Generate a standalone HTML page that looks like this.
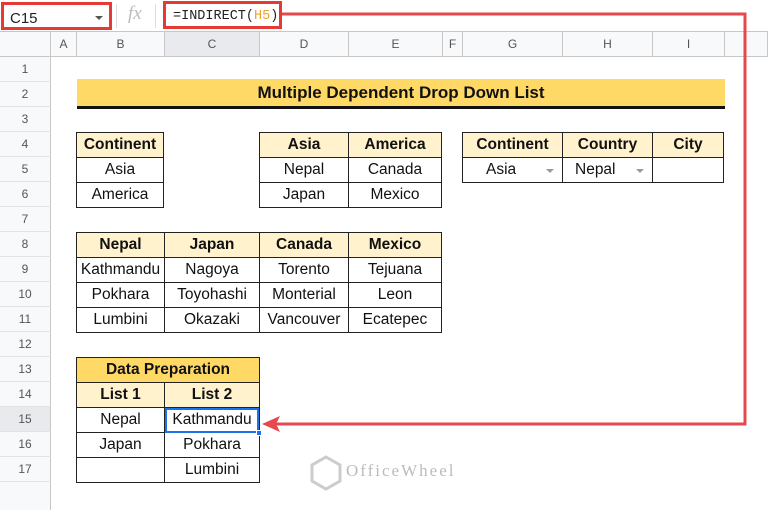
<!DOCTYPE html>
<html><head><style>
body{margin:0;width:768px;height:510px;overflow:hidden;background:#fff;font-family:"Liberation Sans",Arial,sans-serif;position:relative}
.a{position:absolute;box-sizing:border-box}
.c{position:absolute;box-sizing:border-box;display:flex;align-items:center;justify-content:center;font-size:15.5px;color:#111;background:#fff;border:1px solid #222;margin:0 0 0 -1px}
.h{background:#fff2cc;font-weight:bold}
.y{background:#ffd966;font-weight:bold}
.ch{position:absolute;top:32px;height:25px;display:flex;align-items:center;justify-content:center;font-size:12px;color:#555;background:#f8f9fa;border-right:1px solid #c7c7c7;border-bottom:1px solid #c7c7c7;box-sizing:border-box}
.rh{position:absolute;left:0;width:51px;height:25px;display:flex;align-items:center;justify-content:center;font-size:12px;color:#555;background:#f8f9fa;border-right:1px solid #c7c7c7;border-bottom:1px solid #e2e3e3;box-sizing:border-box}
.dd{position:absolute;right:8px;top:11px;border-left:4px solid transparent;border-right:4px solid transparent;border-top:4px solid #999}
</style></head><body>
<div class="a" style="left:0;top:0;width:768px;height:32px;background:#fff;border-bottom:1px solid #c7c7c7"></div>
<div class="a" style="left:1px;top:2px;width:111px;height:28px;border:3px solid #e53935;font-size:15px;padding:5px 0 0 6px;color:#222">C15<div style="position:absolute;right:6px;top:11px;border-left:4px solid transparent;border-right:4px solid transparent;border-top:4px solid #555"></div></div>
<div class="a" style="left:116px;top:4px;width:1px;height:24px;background:#ddd"></div>
<div class="a" style="left:128px;top:3px;font-family:'Liberation Serif',serif;font-style:italic;font-size:19px;color:#bbb">fx</div>
<div class="a" style="left:155px;top:4px;width:1px;height:24px;background:#ddd"></div>
<div class="a" style="left:163px;top:1px;width:119px;height:28px;border:3px solid #e53935;font-family:'Liberation Mono',monospace;font-size:13.5px;padding:5px 0 0 7px;color:#222">=INDIRECT(<span style="color:#f0a030">H5</span>)</div>
<div class="ch" style="left:0;width:51px"></div>
<div class="ch" style="left:51px;width:26px">A</div>
<div class="ch" style="left:77px;width:88px">B</div>
<div class="ch" style="left:165px;width:95px;background:#e8eaed">C</div>
<div class="ch" style="left:260px;width:89px">D</div>
<div class="ch" style="left:349px;width:94px">E</div>
<div class="ch" style="left:443px;width:20px">F</div>
<div class="ch" style="left:463px;width:100px">G</div>
<div class="ch" style="left:563px;width:90px">H</div>
<div class="ch" style="left:653px;width:72px">I</div>
<div class="ch" style="left:725px;width:43px"></div>
<div class="rh" style="top:57px">1</div><div class="rh" style="top:82px">2</div><div class="rh" style="top:107px">3</div><div class="rh" style="top:132px">4</div><div class="rh" style="top:157px">5</div><div class="rh" style="top:182px">6</div><div class="rh" style="top:207px">7</div><div class="rh" style="top:232px">8</div><div class="rh" style="top:257px">9</div><div class="rh" style="top:282px">10</div><div class="rh" style="top:307px">11</div><div class="rh" style="top:332px">12</div><div class="rh" style="top:357px">13</div><div class="rh" style="top:382px">14</div><div class="rh" style="top:407px;background:#e8eaed">15</div><div class="rh" style="top:432px">16</div><div class="rh" style="top:457px">17</div><div class="rh" style="top:482px;height:28px;border-bottom:none"></div>
<div class="a" style="left:77px;top:79px;width:648px;height:30px;background:#ffd966;border-bottom:3px solid #111;display:flex;align-items:center;justify-content:center;font-weight:bold;font-size:17px;color:#111">Multiple Dependent Drop Down List</div>
<div class="c h" style="left:77px;top:132px;width:88px;height:26px">Continent</div>
<div class="c" style="left:77px;top:157px;width:88px;height:26px">Asia</div>
<div class="c" style="left:77px;top:182px;width:88px;height:26px">America</div>
<div class="c h" style="left:260px;top:132px;width:90px;height:26px">Asia</div>
<div class="c h" style="left:349px;top:132px;width:94px;height:26px">America</div>
<div class="c" style="left:260px;top:157px;width:90px;height:26px">Nepal</div>
<div class="c" style="left:349px;top:157px;width:94px;height:26px">Canada</div>
<div class="c" style="left:260px;top:182px;width:90px;height:26px">Japan</div>
<div class="c" style="left:349px;top:182px;width:94px;height:26px">Mexico</div>
<div class="c h" style="left:463px;top:132px;width:101px;height:26px">Continent</div>
<div class="c h" style="left:563px;top:132px;width:91px;height:26px">Country</div>
<div class="c h" style="left:653px;top:132px;width:72px;height:26px">City</div>
<div class="c" style="left:463px;top:157px;width:101px;height:26px;justify-content:flex-start;padding-left:23px">Asia<div class="dd"></div></div>
<div class="c" style="left:563px;top:157px;width:91px;height:26px;justify-content:flex-start;padding-left:12px">Nepal<div class="dd"></div></div>
<div class="c" style="left:653px;top:157px;width:72px;height:26px"></div>
<div class="c h" style="left:77px;top:232px;width:89px;height:26px">Nepal</div>
<div class="c h" style="left:165px;top:232px;width:96px;height:26px">Japan</div>
<div class="c h" style="left:260px;top:232px;width:90px;height:26px">Canada</div>
<div class="c h" style="left:349px;top:232px;width:94px;height:26px">Mexico</div>
<div class="c" style="left:77px;top:257px;width:89px;height:26px">Kathmandu</div>
<div class="c" style="left:165px;top:257px;width:96px;height:26px">Nagoya</div>
<div class="c" style="left:260px;top:257px;width:90px;height:26px">Torento</div>
<div class="c" style="left:349px;top:257px;width:94px;height:26px">Tejuana</div>
<div class="c" style="left:77px;top:282px;width:89px;height:26px">Pokhara</div>
<div class="c" style="left:165px;top:282px;width:96px;height:26px">Toyohashi</div>
<div class="c" style="left:260px;top:282px;width:90px;height:26px">Monterial</div>
<div class="c" style="left:349px;top:282px;width:94px;height:26px">Leon</div>
<div class="c" style="left:77px;top:307px;width:89px;height:26px">Lumbini</div>
<div class="c" style="left:165px;top:307px;width:96px;height:26px">Okazaki</div>
<div class="c" style="left:260px;top:307px;width:90px;height:26px">Vancouver</div>
<div class="c" style="left:349px;top:307px;width:94px;height:26px">Ecatepec</div>
<div class="c y" style="left:77px;top:357px;width:184px;height:26px">Data Preparation</div>
<div class="c h" style="left:77px;top:382px;width:89px;height:26px">List 1</div>
<div class="c h" style="left:165px;top:382px;width:96px;height:26px">List 2</div>
<div class="c" style="left:77px;top:407px;width:89px;height:26px">Nepal</div>
<div class="c" style="left:165px;top:407px;width:96px;height:26px">Kathmandu</div>
<div class="c" style="left:77px;top:432px;width:89px;height:26px">Japan</div>
<div class="c" style="left:165px;top:432px;width:96px;height:26px">Pokhara</div>
<div class="c" style="left:77px;top:457px;width:89px;height:26px"></div>
<div class="c" style="left:165px;top:457px;width:96px;height:26px">Lumbini</div>
<div class="a" style="left:165px;top:408px;width:94px;height:25px;border:2px solid #1a73e8"></div>
<div class="a" style="left:256px;top:430px;width:6px;height:6px;background:#1a73e8;border:1px solid #fff"></div>
<svg class="a" style="left:0;top:0" width="768" height="510">
<polyline points="282,14 745,14 745,424 274,424" fill="none" stroke="#e5484d" stroke-width="3"/>
<polygon points="262,424 280,416 276,424 280,432" fill="#e5484d"/>
<polygon points="326,457 340,465 340,481 326,489 312,481 312,465" fill="none" stroke="#ccc" stroke-width="3"/>
</svg>
<div class="a" style="left:346px;top:461px;font-family:'Liberation Serif',serif;font-size:17px;letter-spacing:2px;color:#bbb">OfficeWheel</div>
</body></html>
